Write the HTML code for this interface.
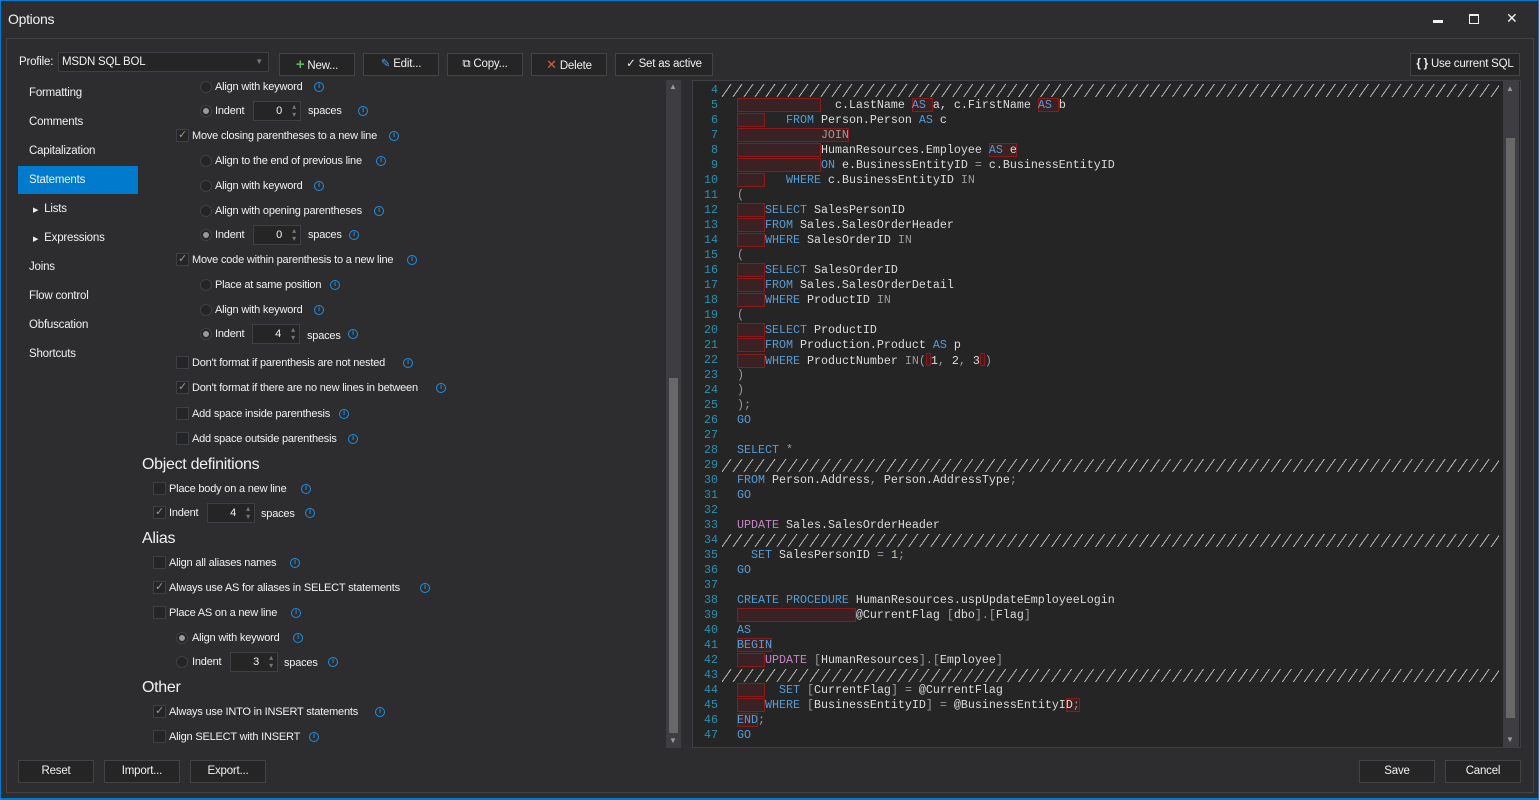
<!DOCTYPE html>
<html><head><meta charset="utf-8"><style>
*{box-sizing:border-box;margin:0;padding:0}
body{width:1539px;height:800px;background:#2d2d30;position:relative;overflow:hidden;font-family:"Liberation Sans",sans-serif;color:#f1f1f1;font-size:11px;letter-spacing:-0.2px}
.win{position:absolute;left:0;top:0;width:1539px;height:800px;border:1px solid #007acc;border-bottom:2px solid #007acc}
.a{position:absolute;white-space:nowrap}
.frame{position:absolute;left:6px;top:38px;width:1528px;height:755px;border:1px solid #434346}
.btn{position:absolute;height:23px;background:#252526;border:1px solid #434346;color:#f1f1f1;text-align:center;line-height:21px;font-size:11.5px}
.nav{position:absolute;left:29px;font-size:11.5px}
.rad{position:absolute;width:12px;height:12px;border-radius:50%;background:#252526;border:1px solid #3f3f46}
.rad.on::after{content:"";position:absolute;left:2px;top:2px;width:6px;height:6px;border-radius:50%;background:#999}
.chk{position:absolute;width:13px;height:13px;background:#252526;border:1px solid #3f3f46;color:#999;font-size:11px;line-height:11px;text-align:center}
.inf{position:absolute;width:10px;height:10px;border-radius:50%;border:1px solid #1e90e0;color:#1e90e0;font-size:7px;line-height:8px;text-align:center;font-weight:bold}
.num{position:absolute;height:20px;background:#252526;border:1px solid #3f3f46;text-align:right;padding-right:18px;line-height:18px}
.num::after{content:"▴\A▾";white-space:pre;position:absolute;right:4px;top:1px;font-size:8px;line-height:8px;color:#777}
.h{position:absolute;left:142px;font-size:16px;letter-spacing:-0.3px;top:0}
.code{position:absolute;left:692px;top:80px;width:829px;height:668px;background:#252526;border:1px solid #3f3f46;overflow:hidden}
.ln{position:absolute;left:0;width:100%;height:15px;font-family:"Liberation Mono",monospace;font-size:11.67px;line-height:15px;white-space:pre;letter-spacing:0;color:#dcdcdc}
.ln i{font-style:normal;position:absolute;left:0;width:25px;text-align:right;color:#2b91af}
.ln s{text-decoration:none;position:absolute;left:44px}
.hat::before{content:"";position:absolute;left:29px;right:3px;top:1px;bottom:1px;background:repeating-linear-gradient(-55deg,transparent 0 6px,#b8b8b8 6px 7px,transparent 7px 9px)}
.k{color:#569cd6}.g{color:#9b9b9b}.p{color:#c586c0}.n{color:#b5cea8}
.b{background:#3a2224;box-shadow:inset 0 0 0 1px #8b1a1a}
.sb{position:absolute;background:#3e3e42}
.th{position:absolute;background:#686868}
</style></head><body>
<div class="win"></div>
<div class="a" style="left:8px;top:11px;font-size:14px;letter-spacing:-0.3px">Options</div>
<div class="a" style="left:1433px;top:20px;width:10px;height:3px;background:#f1f1f1"></div>
<div class="a" style="left:1469px;top:14px;width:10px;height:10px;border:1px solid #f1f1f1;border-top-width:2px"></div>
<div class="a" style="left:1506px;top:10px;font-size:14px">✕</div>
<div class="frame"></div>

<div class="a" style="left:19px;top:56px;font-size:11.5px">Profile:</div>
<div class="a" style="left:58px;top:52px;width:211px;height:20px;background:#252526;border:1px solid #3f3f46;padding-left:3px;line-height:18px;font-size:11.5px">MSDN SQL BOL<span style="position:absolute;right:5px;color:#777;font-size:8px">▼</span></div>
<div class="btn" style="left:279px;top:53px;width:76px"><span style="color:#5cb85c;font-weight:bold;font-size:15px">+</span> New...</div>
<div class="btn" style="left:363px;top:53px;width:76px"><span style="color:#4a9ee0">✎</span> Edit...</div>
<div class="btn" style="left:447px;top:53px;width:76px">⧉ Copy...</div>
<div class="btn" style="left:531px;top:53px;width:76px"><span style="color:#e05a4a;font-size:13px">✕</span> Delete</div>
<div class="btn" style="left:615px;top:53px;width:98px">✓ Set as active</div>
<div class="btn" style="left:1410px;top:53px;width:110px"><b>{ }</b> Use current SQL</div>

<div class="a" style="left:18px;top:166px;width:120px;height:28px;background:#007acc"></div>
<div class="nav" style="top:87px">Formatting</div>
<div class="nav" style="top:116px">Comments</div>
<div class="nav" style="top:145px">Capitalization</div>
<div class="nav" style="top:174px">Statements</div>
<div class="nav" style="top:203px;left:33px"><span style="font-size:7px">▶</span>&nbsp; Lists</div>
<div class="nav" style="top:232px;left:33px"><span style="font-size:7px">▶</span>&nbsp; Expressions</div>
<div class="nav" style="top:261px">Joins</div>
<div class="nav" style="top:290px">Flow control</div>
<div class="nav" style="top:319px">Obfuscation</div>
<div class="nav" style="top:348px">Shortcuts</div>

<div class="rad" style="left:200px;top:81px"></div><div class="a" style="left:215px;top:81px">Align with keyword</div><div class="inf" style="left:314px;top:82px">i</div>
<div class="rad on" style="left:200px;top:105px"></div><div class="a" style="left:215px;top:105px">Indent</div><div class="num" style="left:253px;top:101px;width:48px">0</div><div class="a" style="left:308px;top:105px">spaces</div><div class="inf" style="left:358px;top:106px">i</div>
<div class="chk" style="left:176px;top:129px">✓</div><div class="a" style="left:192px;top:130px">Move closing parentheses to a new line</div><div class="inf" style="left:389px;top:131px">i</div>
<div class="rad" style="left:200px;top:155px"></div><div class="a" style="left:215px;top:155px">Align to the end of previous line</div><div class="inf" style="left:376px;top:156px">i</div>
<div class="rad" style="left:200px;top:180px"></div><div class="a" style="left:215px;top:180px">Align with keyword</div><div class="inf" style="left:314px;top:181px">i</div>
<div class="rad" style="left:200px;top:205px"></div><div class="a" style="left:215px;top:205px">Align with opening parentheses</div><div class="inf" style="left:374px;top:206px">i</div>
<div class="rad on" style="left:200px;top:229px"></div><div class="a" style="left:215px;top:229px">Indent</div><div class="num" style="left:253px;top:225px;width:48px">0</div><div class="a" style="left:308px;top:229px">spaces</div><div class="inf" style="left:349px;top:230px">i</div>
<div class="chk" style="left:176px;top:253px">✓</div><div class="a" style="left:192px;top:254px">Move code within parenthesis to a new line</div><div class="inf" style="left:407px;top:255px">i</div>
<div class="rad" style="left:200px;top:279px"></div><div class="a" style="left:215px;top:279px">Place at same position</div><div class="inf" style="left:330px;top:280px">i</div>
<div class="rad" style="left:200px;top:304px"></div><div class="a" style="left:215px;top:304px">Align with keyword</div><div class="inf" style="left:314px;top:305px">i</div>
<div class="rad on" style="left:200px;top:328px"></div><div class="a" style="left:215px;top:328px">Indent</div><div class="num" style="left:252px;top:324px;width:48px">4</div><div class="a" style="left:307px;top:330px">spaces</div><div class="inf" style="left:348px;top:329px">i</div>
<div class="chk" style="left:176px;top:356px"></div><div class="a" style="left:192px;top:357px">Don't format if parenthesis are not nested</div><div class="inf" style="left:403px;top:358px">i</div>
<div class="chk" style="left:176px;top:381px">✓</div><div class="a" style="left:192px;top:382px">Don't format if there are no new lines in between</div><div class="inf" style="left:436px;top:383px">i</div>
<div class="chk" style="left:176px;top:407px"></div><div class="a" style="left:192px;top:408px">Add space inside parenthesis</div><div class="inf" style="left:339px;top:409px">i</div>
<div class="chk" style="left:176px;top:432px"></div><div class="a" style="left:192px;top:433px">Add space outside parenthesis</div><div class="inf" style="left:348px;top:434px">i</div>
<div class="a" style="left:142px;top:456px;font-size:16px;letter-spacing:-0.3px">Object definitions</div>
<div class="chk" style="left:153px;top:482px"></div><div class="a" style="left:169px;top:483px">Place body on a new line</div><div class="inf" style="left:301px;top:484px">i</div>
<div class="chk" style="left:153px;top:506px">✓</div><div class="a" style="left:169px;top:507px">Indent</div><div class="num" style="left:207px;top:503px;width:48px">4</div><div class="a" style="left:261px;top:508px">spaces</div><div class="inf" style="left:305px;top:508px">i</div>
<div class="a" style="left:142px;top:530px;font-size:16px;letter-spacing:-0.3px">Alias</div>
<div class="chk" style="left:153px;top:556px"></div><div class="a" style="left:169px;top:557px">Align all aliases names</div><div class="inf" style="left:290px;top:558px">i</div>
<div class="chk" style="left:153px;top:581px">✓</div><div class="a" style="left:169px;top:582px">Always use AS for aliases in SELECT statements</div><div class="inf" style="left:420px;top:583px">i</div>
<div class="chk" style="left:153px;top:606px"></div><div class="a" style="left:169px;top:607px">Place AS on a new line</div><div class="inf" style="left:291px;top:608px">i</div>
<div class="rad on" style="left:176px;top:632px"></div><div class="a" style="left:192px;top:632px">Align with keyword</div><div class="inf" style="left:293px;top:633px">i</div>
<div class="rad" style="left:176px;top:656px"></div><div class="a" style="left:192px;top:656px">Indent</div><div class="num" style="left:230px;top:652px;width:48px">3</div><div class="a" style="left:284px;top:657px">spaces</div><div class="inf" style="left:328px;top:657px">i</div>
<div class="a" style="left:142px;top:679px;font-size:16px;letter-spacing:-0.3px">Other</div>
<div class="chk" style="left:153px;top:705px">✓</div><div class="a" style="left:169px;top:706px">Always use INTO in INSERT statements</div><div class="inf" style="left:375px;top:707px">i</div>
<div class="chk" style="left:153px;top:730px"></div><div class="a" style="left:169px;top:731px">Align SELECT with INSERT</div><div class="inf" style="left:309px;top:732px">i</div>

<div class="sb" style="left:666px;top:80px;width:15px;height:668px"></div>
<div class="th" style="left:669px;top:378px;width:9px;height:355px"></div>
<div class="a" style="left:669px;top:82px;font-size:8px;color:#999">▲</div>
<div class="a" style="left:669px;top:736px;font-size:8px;color:#999">▼</div>

<div class="code">
<div class="sb" style="left:810px;top:0;width:16px;height:666px;background:#3e3e42"></div>
<div class="th" style="left:813px;top:57px;width:9px;height:580px"></div>
<div class="a" style="left:813px;top:3px;font-size:8px;color:#999">▲</div>
<div class="a" style="left:813px;top:654px;font-size:8px;color:#999">▼</div>
</div>
<div id="c" style="position:absolute;left:693px;top:83px;width:809px;height:663px;overflow:hidden">
<div class="ln hat" style="top:0"><i>4</i></div>
<div class="ln" style="top:15px"><i>5</i><s><span class="b">            </span>  c.LastName <span class="b k">AS </span>a, c.FirstName <span class="b k">AS </span>b</s></div>
<div class="ln" style="top:30px"><i>6</i><s><span class="b">    </span>   <span class="k">FROM</span> Person.Person <span class="k">AS</span> c</s></div>
<div class="ln" style="top:45px"><i>7</i><s><span class="b g">            JOIN</span></s></div>
<div class="ln" style="top:60px"><i>8</i><s><span class="b">            </span>HumanResources.Employee <span class="b"><span class="k">AS</span> e</span></s></div>
<div class="ln" style="top:75px"><i>9</i><s><span class="b">            </span><span class="k">ON</span> e.BusinessEntityID <span class="g">=</span> c.BusinessEntityID</s></div>
<div class="ln" style="top:90px"><i>10</i><s><span class="b">    </span>   <span class="k">WHERE</span> c.BusinessEntityID <span class="g">IN</span></s></div>
<div class="ln" style="top:105px"><i>11</i><s><span class="g">(</span></s></div>
<div class="ln" style="top:120px"><i>12</i><s><span class="b">    </span><span class="k">SELECT</span> SalesPersonID</s></div>
<div class="ln" style="top:135px"><i>13</i><s><span class="b">    </span><span class="k">FROM</span> Sales.SalesOrderHeader</s></div>
<div class="ln" style="top:150px"><i>14</i><s><span class="b">    </span><span class="k">WHERE</span> SalesOrderID <span class="g">IN</span></s></div>
<div class="ln" style="top:165px"><i>15</i><s><span class="g">(</span></s></div>
<div class="ln" style="top:180px"><i>16</i><s><span class="b">    </span><span class="k">SELECT</span> SalesOrderID</s></div>
<div class="ln" style="top:195px"><i>17</i><s><span class="b">    </span><span class="k">FROM</span> Sales.SalesOrderDetail</s></div>
<div class="ln" style="top:210px"><i>18</i><s><span class="b">    </span><span class="k">WHERE</span> ProductID <span class="g">IN</span></s></div>
<div class="ln" style="top:225px"><i>19</i><s><span class="g">(</span></s></div>
<div class="ln" style="top:240px"><i>20</i><s><span class="b">    </span><span class="k">SELECT</span> ProductID</s></div>
<div class="ln" style="top:255px"><i>21</i><s><span class="b">    </span><span class="k">FROM</span> Production.Product <span class="k">AS</span> p</s></div>
<div class="ln" style="top:270px"><i>22</i><s><span class="b">    </span><span class="k">WHERE</span> ProductNumber <span class="g">IN(</span><span class="b" style="display:inline-block;width:5px;height:13px;vertical-align:-2px"></span>1<span class="g">,</span> 2<span class="g">,</span> 3<span class="b" style="display:inline-block;width:5px;height:13px;vertical-align:-2px"></span><span class="g">)</span></s></div>
<div class="ln" style="top:285px"><i>23</i><s><span class="g">)</span></s></div>
<div class="ln" style="top:300px"><i>24</i><s><span class="g">)</span></s></div>
<div class="ln" style="top:315px"><i>25</i><s><span class="g">);</span></s></div>
<div class="ln" style="top:330px"><i>26</i><s><span class="k">GO</span></s></div>
<div class="ln" style="top:345px"><i>27</i></div>
<div class="ln" style="top:360px"><i>28</i><s><span class="k">SELECT</span> <span class="g">*</span></s></div>
<div class="ln hat" style="top:375px"><i>29</i></div>
<div class="ln" style="top:390px"><i>30</i><s><span class="k">FROM</span> Person.Address<span class="g">,</span> Person.AddressType<span class="g">;</span></s></div>
<div class="ln" style="top:405px"><i>31</i><s><span class="k">GO</span></s></div>
<div class="ln" style="top:420px"><i>32</i></div>
<div class="ln" style="top:435px"><i>33</i><s><span class="p">UPDATE</span> Sales.SalesOrderHeader</s></div>
<div class="ln hat" style="top:450px"><i>34</i></div>
<div class="ln" style="top:465px"><i>35</i><s>  <span class="k">SET</span> SalesPersonID <span class="g">=</span> <span class="n">1</span><span class="g">;</span></s></div>
<div class="ln" style="top:480px"><i>36</i><s><span class="k">GO</span></s></div>
<div class="ln" style="top:495px"><i>37</i></div>
<div class="ln" style="top:510px"><i>38</i><s><span class="k">CREATE PROCEDURE</span> HumanResources.uspUpdateEmployeeLogin</s></div>
<div class="ln" style="top:525px"><i>39</i><s><span class="b">                 </span>@CurrentFlag <span class="g">[</span>dbo<span class="g">].[</span>Flag<span class="g">]</span></s></div>
<div class="ln" style="top:540px"><i>40</i><s><span class="k">AS</span></s></div>
<div class="ln" style="top:555px"><i>41</i><s><span class="b k">BEGIN</span></s></div>
<div class="ln" style="top:570px"><i>42</i><s><span class="b">    </span><span class="p">UPDATE</span> <span class="g">[</span>HumanResources<span class="g">].[</span>Employee<span class="g">]</span></s></div>
<div class="ln hat" style="top:585px"><i>43</i></div>
<div class="ln" style="top:600px"><i>44</i><s><span class="b">    </span>  <span class="k">SET</span> <span class="g">[</span>CurrentFlag<span class="g">]</span> <span class="g">=</span> @CurrentFlag</s></div>
<div class="ln" style="top:615px"><i>45</i><s><span class="b">    </span><span class="k">WHERE</span> <span class="g">[</span>BusinessEntityID<span class="g">]</span> <span class="g">=</span> @BusinessEntityI<span class="b">D<span class="g">;</span></span></s></div>
<div class="ln" style="top:630px"><i>46</i><s><span class="b k">END</span><span class="g">;</span></s></div>
<div class="ln" style="top:645px"><i>47</i><s><span class="k">GO</span></s></div>
</div>

<div class="btn" style="left:18px;top:760px;width:76px">Reset</div>
<div class="btn" style="left:104px;top:760px;width:76px">Import...</div>
<div class="btn" style="left:190px;top:760px;width:76px">Export...</div>
<div class="btn" style="left:1359px;top:760px;width:76px">Save</div>
<div class="btn" style="left:1445px;top:760px;width:76px">Cancel</div>
</body></html>
